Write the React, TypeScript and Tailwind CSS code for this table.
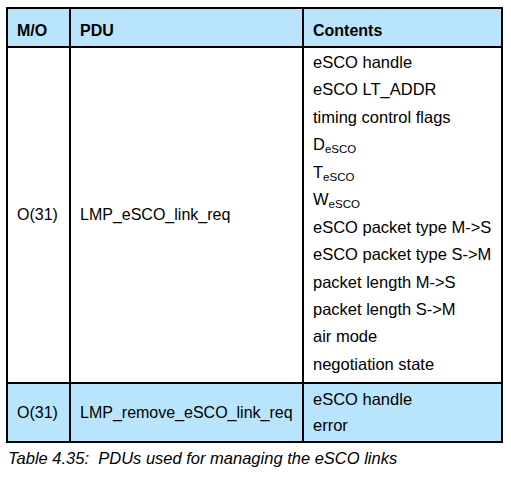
const contents = [
  'eSCO handle',
  'eSCO LT_ADDR',
  'timing control flags',
  { main: 'D', sub: 'eSCO' },
  { main: 'T', sub: 'eSCO' },
  { main: 'W', sub: 'eSCO' },
  'eSCO packet type M->S',
  'eSCO packet type S->M',
  'packet length M->S',
  'packet length S->M',
  'air mode',
  'negotiation state',
];

type Line = string | { main: string; sub: string };

function ContentLine({ line }: { line: Line }) {
  if (typeof line === 'string') return <div className="h-[27.45px]">{line}</div>;
  return (
    <div className="h-[27.45px]">
      {line.main}
      <span className="relative top-[3px] text-[11.5px] leading-none">{line.sub}</span>
    </div>
  );
}

export default function App() {
  return (
    <div className="min-h-[478px] w-[511px] bg-white pl-[6px] pt-[7px] text-[16px] text-black" style={{ fontFamily: '"Liberation Sans", Arial, sans-serif' }}>
      <div className="w-[497px] border-2 border-black">
        {/* header */}
        <div className="grid h-[37px] grid-cols-[61px_233px_1fr] bg-[#b9e5fc] font-bold">
          <div className="pl-[9px] pt-[13px] leading-[18px]">M/O</div>
          <div className="border-l-2 border-black pl-[9px] pt-[13px] leading-[18px]">PDU</div>
          <div className="border-l-2 border-black pl-[9px] pt-[13px] leading-[18px]">Contents</div>
        </div>

        <div className="grid h-[336px] grid-cols-[61px_233px_1fr] border-t-2 border-black">
          <div className="flex items-center pl-[9px]">O(31)</div>
          <div className="flex items-center border-l-2 border-black pl-[9px]">LMP_eSCO_link_req</div>
          <div className="border-l-2 border-black pl-[9px] pt-[1px] text-[16.5px] leading-[27.45px]">
            {contents.map((line, i) => (
              <ContentLine key={i} line={line} />
            ))}
          </div>
        </div>

        <div className="grid h-[59px] grid-cols-[61px_233px_1fr] border-t-2 border-black bg-[#b9e5fc]">
          <div className="flex items-center pl-[9px]">O(31)</div>
          <div className="flex items-center border-l-2 border-black pl-[9px]">LMP_remove_eSCO_link_req</div>
          <div className="border-l-2 border-black pl-[9px] pt-[2px] text-[16.5px] leading-[26px]">
            <div>eSCO handle</div>
            <div>error</div>
          </div>
        </div>
      </div>

      <p className="mt-[6px] pl-[2px] text-[16.5px] italic leading-[19px]">Table 4.35:&nbsp; PDUs used for managing the eSCO links</p>
    </div>
  );
}
